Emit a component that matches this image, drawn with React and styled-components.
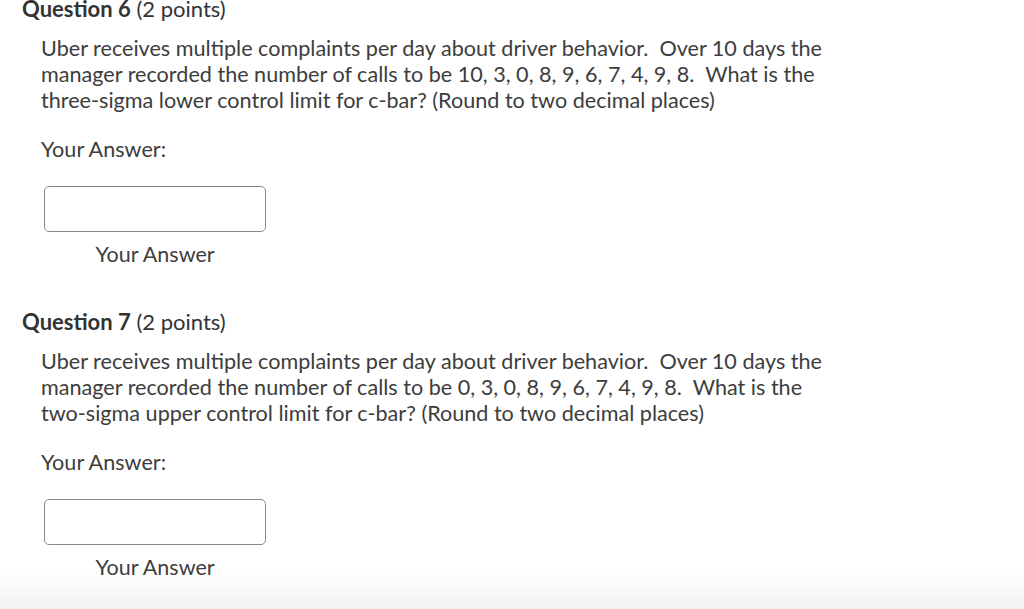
import styled, { createGlobalStyle } from 'styled-components'

const GlobalStyle = createGlobalStyle`
    html, body {
        margin: 0;
        padding: 0;
        background: #fff;
        height: 100%;
        overflow: hidden;
    }
    body {
        font-family: Lato, "Open Sans", sans-serif;
        color: #3d3d3d;
    }
`

const Page = styled.div`
    padding: 0 0 0 22px;
    margin-top: -6px;
`

const Question = styled.section`
    margin-bottom: 40px;
`

const Heading = styled.h2`
    margin: 0;
    font-size: 22px;
    line-height: 30px;
    font-weight: 400;
    color: #333;

    strong {
        font-weight: 700;
    }
`

const Body = styled.div`
    margin: 11px 0 0 19px;
`

const Text = styled.p`
    margin: 0;
    width: 800px;
    font-size: 21.6px;
    line-height: 26px;
`

const Label = styled.div`
    margin-top: 23px;
    font-size: 21.6px;
    line-height: 26px;
`

const AnswerBlock = styled.div`
    margin: 24px 0 0 22px;
    width: 222px;
    display: flex;
    flex-direction: column;
    align-items: center;
`

const Input = styled.input`
    box-sizing: border-box;
    width: 222px;
    height: 46px;
    border: 1px solid #8a8a8a;
    border-radius: 5px;
    background: #fff;
    font-family: inherit;
    font-size: 18px;
    padding: 0 10px;
    outline: none;
`

const Caption = styled.div`
    margin-top: 9px;
    font-size: 21.5px;
    line-height: 26px;
`

const Fade = styled.div`
    position: fixed;
    left: 0;
    right: 0;
    bottom: 0;
    height: 36px;
    background: linear-gradient(to bottom, rgba(242,242,242,0), #f1f1f1);
    pointer-events: none;
`

const questions = [
    {
        n: 6,
        text: 'Uber receives multiple complaints per day about driver behavior.\u00a0 Over 10 days the manager recorded the number of calls to be 10, 3, 0, 8, 9, 6, 7, 4, 9, 8.\u00a0 What is the three-sigma lower control limit for c-bar? (Round to two decimal places)',
    },
    {
        n: 7,
        text: 'Uber receives multiple complaints per day about driver behavior.\u00a0 Over 10 days the manager recorded the number of calls to be 0, 3, 0, 8, 9, 6, 7, 4, 9, 8.\u00a0 What is the two-sigma upper control limit for c-bar? (Round to two decimal places)',
    },
]

const App = () => {
    return (
        <>
            <GlobalStyle />
            <Page>
                {questions.map(q => (
                    <Question key={q.n}>
                        <Heading><strong>Question {q.n}</strong> (2 points)</Heading>
                        <Body>
                            <Text>{q.text}</Text>
                            <Label>Your Answer:</Label>
                        </Body>
                        <AnswerBlock>
                            <Input type="text" aria-label="Your Answer" />
                            <Caption>Your Answer</Caption>
                        </AnswerBlock>
                    </Question>
                ))}
            </Page>
            <Fade />
        </>
    )
}

export default App
